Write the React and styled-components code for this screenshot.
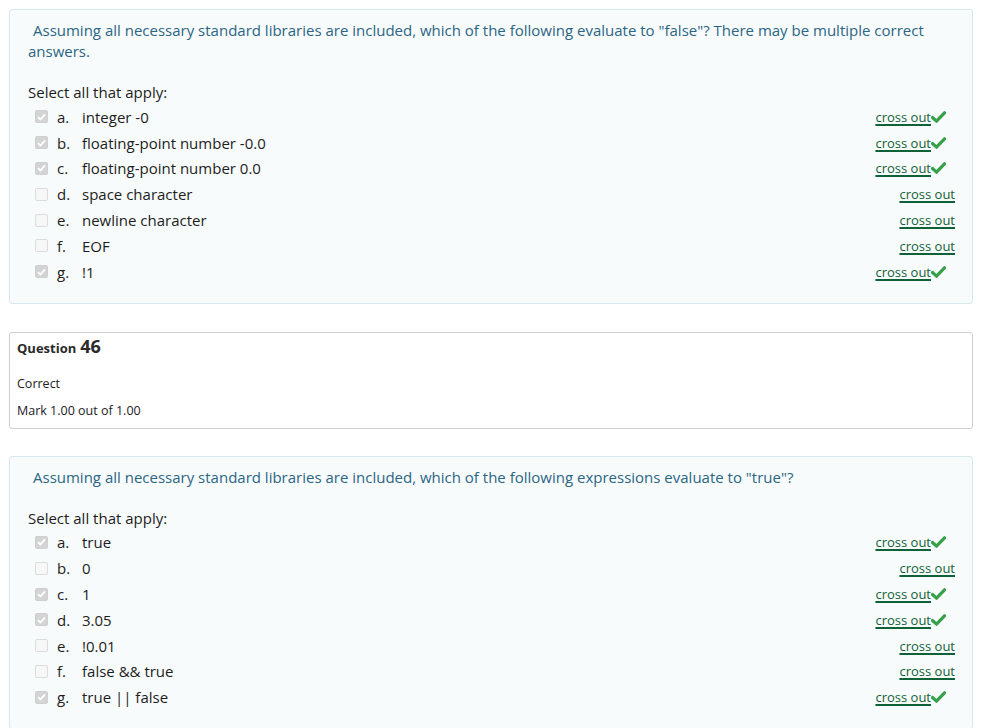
import React from 'react'
import styled, { createGlobalStyle } from 'styled-components'

const GlobalStyle = createGlobalStyle`
  body {
    margin: 0;
    background: #ffffff;
    font-family: "Open Sans", "Liberation Sans", sans-serif;
    color: #1d2125;
  }
`

const Page = styled.div`
  padding: 9px 8px 0 9px;
  display: flex;
  flex-direction: column;
  gap: 28px;
`

const Formulation = styled.div`
  background: #f8fbfb;
  border: 1px solid #d6e8eb;
  border-radius: 3px;
  padding: 10px 17px 18px 18px;
`

const QText = styled.div`
  color: #2b6584;
  font-size: 15px;
  line-height: 21px;
  text-indent: 5px;
`

const Prompt = styled.div`
  margin-top: 20px;
  font-size: 15px;
  line-height: 21px;
  color: #1d1d1d;
`

const Answers = styled.div`
  display: flex;
  flex-direction: column;
  margin-top: 1px;
`

const Row = styled.div`
  display: flex;
  align-items: center;
  height: 25.8px;
  font-size: 15px;
  color: #1d1d1d;
`

const Box = styled.span`
  width: 13px;
  height: 13px;
  margin-left: 7px;
  border-radius: 2px;
  border: 1px solid ${p => (p.$checked ? '#cfcfcf' : '#dcdcdc')};
  background: ${p => (p.$checked ? '#d4d4d4' : '#f7f7f7')};
  box-sizing: border-box;
  display: flex;
  align-items: center;
  justify-content: center;
`

const Letter = styled.span`
  width: 25px;
  margin-left: 9px;
`

const Label = styled.span`
  flex: 1;
`

const CrossOut = styled.a`
  font-size: 13px;
  color: #0f6237;
  text-decoration: underline;
  text-decoration-thickness: 2px;
  text-underline-offset: 2px;
  cursor: pointer;
`

const Feedback = styled.span`
  width: ${p => (p.$shown ? '15px' : '0')};
  margin-right: ${p => (p.$shown ? '9px' : '0')};
  display: flex;
  align-items: center;
`

const InfoCard = styled.div`
  border: 1px solid #cfcfcf;
  border-radius: 3px;
  padding: 1px 7px 4px 7px;
  margin-bottom: -1px;
  font-size: 12.5px;
  color: #1d2125;
`

const QNo = styled.h3`
  margin: 0 0 12px 0;
  font-size: 13px;
  font-weight: 700;
  color: #2a2a2a;
  display: flex;
  align-items: baseline;
  gap: 4px;
`

const QNum = styled.span`
  font-size: 18px;
`

const InfoLine = styled.div`
  line-height: 27px;
`

const Tick = () => (
  <svg width="15" height="12" viewBox="0 0 15 12">
    <path d="M1.5 6.5 L5.5 10.2 L13.5 1.8" fill="none" stroke="#36a04a" strokeWidth="3.2" strokeLinecap="round" strokeLinejoin="round" />
  </svg>
)

const BoxTick = () => (
  <svg width="9" height="8" viewBox="0 0 9 8">
    <path d="M1 4.2 L3.4 6.5 L8 1.3" fill="none" stroke="#ffffff" strokeWidth="1.8" />
  </svg>
)

const Question = ({ text, options }) => (
  <Formulation>
    <QText>{text}</QText>
    <Prompt>Select all that apply:</Prompt>
    <Answers>
      {options.map(([letter, label, checked]) => (
        <Row key={letter}>
          <Box $checked={checked}>{checked && <BoxTick />}</Box>
          <Letter>{letter}.</Letter>
          <Label>{label}</Label>
          <CrossOut>cross out</CrossOut>
          <Feedback $shown={checked}>{checked && <Tick />}</Feedback>
        </Row>
      ))}
    </Answers>
  </Formulation>
)

const q45 = [
  ['a', 'integer -0', true],
  ['b', 'floating-point number -0.0', true],
  ['c', 'floating-point number 0.0', true],
  ['d', 'space character', false],
  ['e', 'newline character', false],
  ['f', 'EOF', false],
  ['g', '!1', true],
]

const q46 = [
  ['a', 'true', true],
  ['b', '0', false],
  ['c', '1', true],
  ['d', '3.05', true],
  ['e', '!0.01', false],
  ['f', 'false && true', false],
  ['g', 'true || false', true],
]

export default function App() {
  return (
    <>
      <GlobalStyle />
      <Page>
        <Question
          text='Assuming all necessary standard libraries are included, which of the following evaluate to "false"? There may be multiple correct answers.'
          options={q45}
        />
        <InfoCard>
          <QNo>Question <QNum>46</QNum></QNo>
          <InfoLine>Correct</InfoLine>
          <InfoLine>Mark 1.00 out of 1.00</InfoLine>
        </InfoCard>
        <Question
          text='Assuming all necessary standard libraries are included, which of the following expressions evaluate to "true"?'
          options={q46}
        />
      </Page>
    </>
  )
}
